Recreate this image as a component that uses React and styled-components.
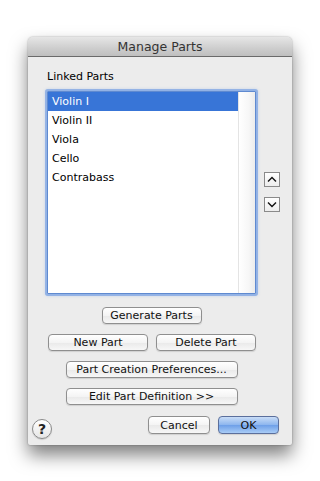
import React from 'react';
import styled, { createGlobalStyle } from 'styled-components';

const Global = createGlobalStyle`
    body {
        margin: 0;
        background: #fff;
        font-family: "Lucida Grande", "DejaVu Sans", sans-serif;
    }
`;

const parts = ['Violin I', 'Violin II', 'Viola', 'Cello', 'Contrabass'];

const Chevron = ({ up }) => (
    <svg width="14" height="13" viewBox="0 0 14 13">
        <polyline
            points={up ? '3,8.5 7,4.5 11,8.5' : '3,4.5 7,8.5 11,4.5'}
            fill="none"
            stroke="#111"
            strokeWidth="1.4"
        />
    </svg>
);

const App = () => {
    return (
        <Page>
            <Global />
            <Window>
                <TitleBar>Manage Parts</TitleBar>
                <Body>
                    <Content>
                        <Main>
                            <Label>Linked Parts</Label>
                            <List>
                                <Rows>
                                    {parts.map((p, i) => (
                                        <Row key={p} selected={i === 0}>{p}</Row>
                                    ))}
                                </Rows>
                                <Scroll />
                            </List>
                            <Buttons>
                                <Button width={100}>Generate Parts</Button>
                                <Pair>
                                    <Button width={100}>New Part</Button>
                                    <Button width={100}>Delete Part</Button>
                                </Pair>
                                <Button width={172}>Part Creation Preferences...</Button>
                                <Button width={172}>Edit Part Definition &gt;&gt;</Button>
                            </Buttons>
                        </Main>
                        <Arrows>
                            <ArrowButton><Chevron up /></ArrowButton>
                            <ArrowButton><Chevron /></ArrowButton>
                        </Arrows>
                    </Content>
                    <Footer>
                        <Help>?</Help>
                        <Spacer />
                        <Button width={62} height={18}>Cancel</Button>
                        <Button width={61} height={18} primary>OK</Button>
                    </Footer>
                </Body>
            </Window>
        </Page>
    );
};

const Page = styled.div`
    width: 320px;
    height: 481px;
    padding: 37px 0 0 28px;
    box-sizing: border-box;
    overflow: hidden;
`;

const Window = styled.div`
    width: 264px;
    border-radius: 5px 5px 2px 2px;
    background: #ececec;
    box-shadow: 0 10px 18px rgba(0, 0, 0, 0.5), 0 0 2px rgba(0, 0, 0, 0.35);
    overflow: hidden;
`;

const TitleBar = styled.div`
    height: 19px;
    line-height: 20px;
    text-align: center;
    font-size: 12.5px;
    color: #333;
    background: linear-gradient(#e6e6e6, #cdcdcd 60%, #bfbfbf);
    border-bottom: 1px solid #6a6a6a;
`;

const Body = styled.div`
    display: flex;
    flex-direction: column;
    padding: 12px 0 6px 0;
`;

const Content = styled.div`
    display: flex;
    padding-left: 19px;
    gap: 8px;
`;

const Main = styled.div`
    display: flex;
    flex-direction: column;
    width: 209px;
`;

const Label = styled.div`
    height: 16px;
    line-height: 16px;
    font-size: 11px;
    color: #000;
    margin-bottom: 6px;
`;

const List = styled.div`
    height: 203px;
    box-sizing: border-box;
    border: 1px solid #5f8ad0;
    box-shadow: 0 0 0 2px rgba(122, 162, 226, 0.7), 0 0 3px 2px rgba(122, 162, 226, 0.35);
    border-radius: 1px;
    background: #fff;
    display: flex;
`;

const Rows = styled.div`
    flex: 1;
    display: flex;
    flex-direction: column;
`;

const Row = styled.div`
    height: 19px;
    line-height: 19px;
    padding-left: 4px;
    font-size: 11px;
    color: ${p => (p.selected ? '#fff' : '#000')};
    background: ${p => (p.selected ? '#3875d7' : 'transparent')};
`;

const Scroll = styled.div`
    width: 16px;
    border-left: 1px solid #e4e4e4;
    background: linear-gradient(to right, #fff, #f7f7f7 60%, #ececec);
`;

const Buttons = styled.div`
    display: flex;
    flex-direction: column;
    align-items: center;
    gap: 10px;
    margin-top: 13px;
`;

const Pair = styled.div`
    display: flex;
    gap: 8px;
    padding-left: 1px;
`;

const Button = styled.div`
    width: ${p => p.width}px;
    height: ${p => p.height || 17}px;
    box-sizing: border-box;
    display: flex;
    align-items: center;
    justify-content: center;
    font-size: 11px;
    color: #111;
    border-radius: 4px;
    border: 1px solid ${p => (p.primary ? '#5b6f9c' : '#8f8f8f')};
    background: ${p =>
        p.primary
            ? 'linear-gradient(#c9ddf7, #8cb5ee 50%, #6d9fe8 51%, #a9ccf6)'
            : 'linear-gradient(#ffffff, #f4f4f4 50%, #e9e9e9 51%, #f7f7f7)'};
    box-shadow: 0 1px 1px rgba(0, 0, 0, 0.12);
    white-space: nowrap;
`;

const Arrows = styled.div`
    display: flex;
    flex-direction: column;
    gap: 10px;
    padding-top: 103px;
`;

const ArrowButton = styled.div`
    width: 16px;
    height: 15px;
    box-sizing: border-box;
    border: 1px solid #8a8a8a;
    background: linear-gradient(#ffffff, #ededed);
    display: flex;
    align-items: center;
    justify-content: center;
`;

const Footer = styled.div`
    display: flex;
    align-items: flex-start;
    gap: 8px;
    margin-top: 11px;
    padding: 0 13px 0 4px;
`;

const Spacer = styled.div`
    flex: 1;
`;

const Help = styled.div`
    width: 20px;
    height: 20px;
    margin-top: 3px;
    box-sizing: border-box;
    border-radius: 50%;
    border: 1px solid #8a8a8a;
    background: linear-gradient(#ffffff, #e6e6e6);
    box-shadow: 0 1px 1px rgba(0, 0, 0, 0.15);
    display: flex;
    align-items: center;
    justify-content: center;
    font-size: 14px;
    font-weight: bold;
    color: #222;
`;

export default App;
